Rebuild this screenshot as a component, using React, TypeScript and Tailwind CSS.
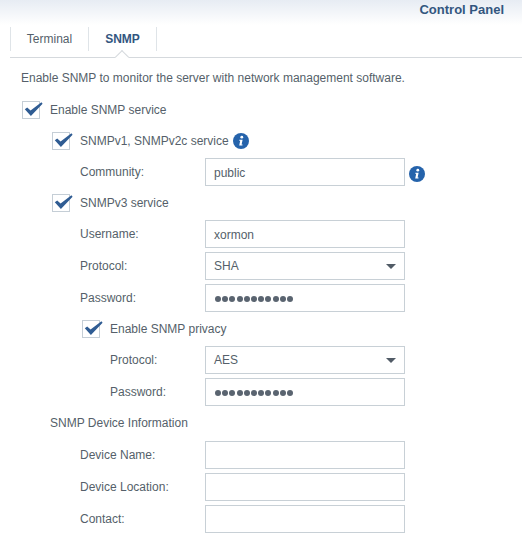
import React from 'react';

const Check = () => (
  <span className="relative block w-[18px] h-[18px] shrink-0 border border-[#c5ced6] bg-white">
    <svg className="absolute left-[1px] top-[-2px]" width="20" height="18" viewBox="0 0 20 18">
      <path d="M0.8 9.2 L3.2 7.4 L6.6 10.6 L17.4 2.2 L18.6 3.8 L6.9 16 Z" fill="#2f5c93" />
    </svg>
  </span>
);

const Info = () => (
  <svg width="16" height="16" viewBox="0 0 16 16" className="block shrink-0">
    <circle cx="8" cy="8" r="8" fill="#2563ab" />
    <circle cx="8.8" cy="4.2" r="1.4" fill="#fff" />
    <path d="M6.4 6.8 H9.6 L8.6 11.4 H9.6 L9.4 12.4 H6.2 L7.2 7.8 H6.2 Z" fill="#fff" />
  </svg>
);

const CheckRow = ({ label, info, indent }: { label: string; info?: boolean; indent: string }) => (
  <div className={`flex items-center h-[18px] ${indent}`}>
    <Check />
    <span className="ml-[10px]">{label}</span>
    {info && <span className="ml-[4px]"><Info /></span>}
  </div>
);

const Field = ({ label, value, select, dots, indent, info }: {
  label: string; value?: string; select?: boolean; dots?: boolean; indent: string; info?: boolean;
}) => (
  <div className={`flex items-center h-[28px] ${indent}`}>
    <span className="flex-1">{label}</span>
    <div className="relative flex items-center w-[200px] h-[28px] shrink-0 border border-[#c8d0d6] bg-white pl-[8px]">
      {dots ? (
        <span className="flex gap-[1.2px] pl-[1px] pt-[2px]">
          {Array.from({ length: 11 }).map((_, i) => (
            <span key={i} className="block w-[6px] h-[6px] rounded-full bg-[#5a6470]" />
          ))}
        </span>
      ) : (
        <span className={select ? '' : 'pt-[1px]'}>{value}</span>
      )}
      {select && (
        <span className="absolute right-[8px] top-[11px] w-0 h-0 border-l-[5px] border-r-[5px] border-t-[5px] border-l-transparent border-r-transparent border-t-[#515b66]" />
      )}
    </div>
    <span className="w-[117px] shrink-0 pl-[4px] pt-[3px]">{info && <Info />}</span>
  </div>
);

export default function App() {
  return (
    <div className="w-[522px] h-[540px] overflow-hidden bg-white text-[12px] text-[#555f6a] font-['Liberation_Sans',sans-serif]">
      <div className="h-[25px] bg-gradient-to-b from-[#e7ecf3] to-white flex justify-end pr-[18px] pt-[2px]">
        <span className="text-[13px] leading-[16px] font-bold text-[#33567f]">Control Panel</span>
      </div>

      <div className="relative mt-[2px] h-[31px] ml-[10px] border-b border-[#d5d9dd] flex items-start">
        <div className="h-[24px] w-[79px] border-l border-r border-[#dfe4e8] flex items-center justify-center">Terminal</div>
        <div className="h-[24px] w-[68px] border-r border-[#dfe4e8] flex items-center justify-center font-bold text-[#33567f]">SNMP</div>
        <span className="absolute left-[107px] top-[25px] w-[10px] h-[10px] rotate-45 bg-white border-l border-t border-[#d5d9dd]" />
      </div>

      <p className="mt-[12px] ml-[21px] leading-[16px]">Enable SNMP to monitor the server with network management software.</p>

      <div className="mt-[15px]"><CheckRow label="Enable SNMP service" indent="ml-[22px]" /></div>
      <div className="mt-[13px]"><CheckRow label="SNMPv1, SNMPv2c service" info indent="ml-[52px]" /></div>
      <div className="mt-[8px]"><Field label="Community:" value="public" info indent="ml-[80px]" /></div>
      <div className="mt-[8px]"><CheckRow label="SNMPv3 service" indent="ml-[52px]" /></div>
      <div className="mt-[8px] flex flex-col gap-[4px]">
        <Field label="Username:" value="xormon" indent="ml-[80px]" />
        <Field label="Protocol:" value="SHA" select indent="ml-[80px]" />
        <Field label="Password:" dots indent="ml-[80px]" />
      </div>
      <div className="mt-[8px]"><CheckRow label="Enable SNMP privacy" indent="ml-[82px]" /></div>
      <div className="mt-[8px] flex flex-col gap-[4px]">
        <Field label="Protocol:" value="AES" select indent="ml-[110px]" />
        <Field label="Password:" dots indent="ml-[110px]" />
      </div>
      <div className="mt-[9px] ml-[50px] leading-[16px]">SNMP Device Information</div>
      <div className="mt-[10px] flex flex-col gap-[4px]">
        <Field label="Device Name:" indent="ml-[80px]" />
        <Field label="Device Location:" indent="ml-[80px]" />
        <Field label="Contact:" indent="ml-[80px]" />
      </div>
    </div>
  );
}
